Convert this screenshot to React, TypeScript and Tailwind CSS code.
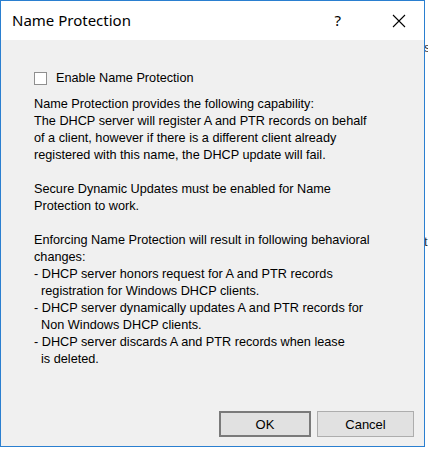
import React from 'react';

const body = '"Liberation Sans", Arial, sans-serif';

function Para({ lines }: { lines: string[] }) {
  return (
    <div>
      {lines.map((l, i) => (
        <div key={i} className="h-[17px] whitespace-pre">
          {l}
        </div>
      ))}
    </div>
  );
}

export default function App() {
  return (
    <div className="relative w-[428px] h-[449px] bg-white overflow-hidden">
      {/* fragments of the window behind */}
      <div
        className="absolute left-[424px] top-[38px] text-[13px] text-[#333]"
        style={{ fontFamily: body }}
      >
        s
      </div>
      <div
        className="absolute left-[424px] top-[232px] text-[13px] text-[#333]"
        style={{ fontFamily: body }}
      >
        t
      </div>

      <div className="relative flex flex-col w-[425px] h-[447px] border border-[#2a7fd0] bg-[#f0f0f0]">
        {/* title bar */}
        <div
          className="flex items-center h-[39px] bg-white shrink-0"
          style={{ fontFamily: '"Noto Sans", "Open Sans", sans-serif' }}
        >
          <span className="ml-[11px] text-[15px] text-black">Name Protection</span>
          <span className="ml-auto mr-[51px] text-[15px] text-black">?</span>
          <svg width="14" height="14" viewBox="0 0 14 14" className="mr-[18px]">
            <path d="M1 1 L13 13 M13 1 L1 13" stroke="#000" strokeWidth="1.1" />
          </svg>
        </div>

        {/* content */}
        <div
          className="flex flex-col flex-1 pl-[33px] pt-[31px] text-[12.7px] text-black leading-[17px]"
          style={{ fontFamily: body }}
        >
          <label className="flex items-center gap-[9px] h-[15px]">
            <span className="w-[13px] h-[13px] border border-[#8f8f8f] bg-white shrink-0" />
            <span>Enable Name Protection</span>
          </label>

          <div className="mt-[10px] flex flex-col gap-[17px]">
            <Para
              lines={[
                'Name Protection provides the following capability:',
                'The DHCP server will register A and PTR records on behalf',
                'of a client, however if there is a different client already',
                'registered with this name, the DHCP update will fail.',
              ]}
            />
            <Para
              lines={[
                'Secure Dynamic Updates must be enabled for Name',
                'Protection to work.',
              ]}
            />
            <Para
              lines={[
                'Enforcing Name Protection will result in following behavioral',
                'changes:',
                '- DHCP server honors request for A and PTR records',
                '  registration for Windows DHCP clients.',
                '- DHCP server dynamically updates A and PTR records for',
                '  Non Windows DHCP clients.',
                '- DHCP server discards A and PTR records when lease',
                '  is deleted.',
              ]}
            />
          </div>

          <div className="mt-auto mb-[9px] mr-[10px] flex justify-end gap-[6px]">
            <button className="w-[92px] h-[26px] bg-[#e1e1e1] border-2 border-[#7a7a7a] text-[13px]">
              OK
            </button>
            <button className="w-[97px] h-[26px] bg-[#e1e1e1] border border-[#adadad] text-[13px]">
              Cancel
            </button>
          </div>
        </div>
      </div>
    </div>
  );
}
